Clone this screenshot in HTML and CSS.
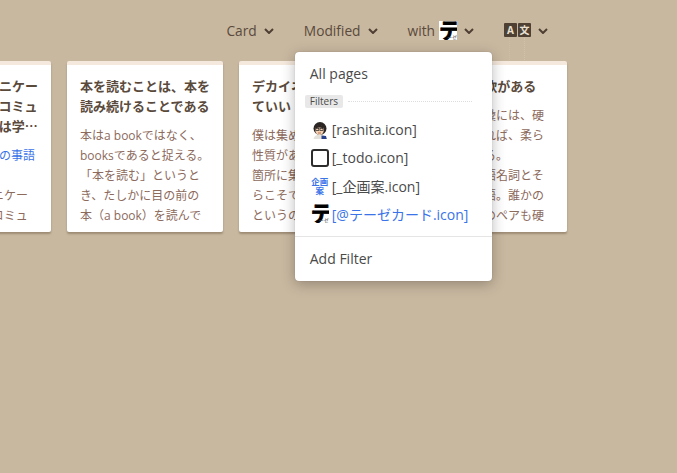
FILE: index.html
```html
<!DOCTYPE html>
<html lang="ja">

<head>
    <meta charset="UTF-8">
    <title>Pages</title>
    <link rel="stylesheet" href="styles.css">
</head>

<body>
    <nav class="toolbar">
        <div class="tool">
            <span>Card</span>
            <svg class="chevron" viewBox="0 0 10 6"><path d="M1 1l4 4 4-4"/></svg>
        </div>
        <div class="tool">
            <span>Modified</span>
            <svg class="chevron" viewBox="0 0 10 6"><path d="M1 1l4 4 4-4"/></svg>
            <div class="menu">
                <div class="menu-item all-pages">All pages</div>
                <div class="menu-label">
                    <span class="chip">Filters</span>
                    <span class="dots"></span>
                </div>
                <div class="filter">
                    <svg class="icon" viewBox="0 0 18 18">
                        <circle cx="9" cy="7.5" r="6.5" fill="#2b2623"/>
                        <path d="M2.500 18c.5-3 3-4.500 6.500-4.500s6 1.500 6.500 4.500z" fill="#e4e0da"/>
                        <path d="M10.500 14.500l4.500 .5.800 3H10.500z" fill="#27408b"/>
                        <ellipse cx="8.500" cy="9" rx="4.300" ry="5" fill="#f3d0b2"/>
                        <path d="M4 6c2-3 7-3 9 0l-1 1.500c-2-1.500-5-1.500-7 0z" fill="#2b2623"/>
                        <rect x="4.800" y="7.300" width="3" height="2.300" fill="none" stroke="#222" stroke-width=".7"/>
                        <rect x="9" y="7.300" width="3" height="2.300" fill="none" stroke="#222" stroke-width=".7"/>
                        <path d="M7 12h3" stroke="#a5553f" stroke-width=".8"/>
                    </svg>
                    <span>[rashita.icon]</span>
                </div>
                <div class="filter">
                    <span class="todo-box"></span>
                    <span>[_todo.icon]</span>
                </div>
                <div class="filter">
                    <span class="plan-icon">企画<br>案</span>
                    <span>[_企画案.icon]</span>
                </div>
                <div class="filter link">
                    <span class="these-icon these-bare">テ<small>ーゼ</small></span>
                    <span>[@テーゼカード.icon]</span>
                </div>
                <hr class="divider">
                <div class="menu-item add-filter">Add Filter</div>
            </div>
        </div>
        <div class="tool">
            <span>with</span>
            <span class="these-icon">テ<small>ーゼ</small></span>
            <svg class="chevron" viewBox="0 0 10 6"><path d="M1 1l4 4 4-4"/></svg>
        </div>
        <div class="tool">
            <span class="lang">
                <span class="lang-box">A</span>
                <span class="lang-box">文</span>
            </span>
            <svg class="chevron" viewBox="0 0 10 6"><path d="M1 1l4 4 4-4"/></svg>
            <span class="lang-dots"></span>
        </div>
    </nav>

    <main class="cards">
        <article class="card">
            <h3>ビジネスコミュニケー<br>ションとしてのコミュ<br>ニケーション力は学…</h3>
            <p class="card-link">Learning: 日本語の事語</p>
            <p>ビジネスコミュニケー<br>ションとしてのコミュ</p>
        </article>
        <article class="card">
            <h3>本を読むことは、本を<br>読み続けることである</h3>
            <p>本はa bookではなく、booksであると捉える。「本を読む」というとき、たしかに目の前の本（a book）を読んで</p>
        </article>
        <article class="card">
            <h3>デカイネタを書き続け<br>ていい</h3>
            <p>僕は集めたものを書く<br>性質がある。一つの<br>箇所に集めているか<br>らこそできる話がある<br>というのが大きい</p>
        </article>
        <article class="card">
            <h3>Aの文章に軟がある</h3>
            <p>日本語の語彙には、硬<br>い言葉があれば、柔ら<br>かい語もある。<br>例えば、漢語名詞とそ<br>れに対する語。誰かの<br>書いた言葉のペアも硬</p>
        </article>
    </main>
</body>

</html>
```

FILE: styles.css
```css
* {
    box-sizing: border-box;
    margin: 0;
    padding: 0;
}

body {
    background-color: #c9b8a0;
    font-family: 'Open Sans', 'Noto Sans CJK JP', sans-serif;
    height: 473px;
    overflow: hidden;
}

.toolbar {
    display: flex;
    justify-content: flex-end;
    align-items: center;
    gap: 30px;
    height: 60px;
    margin-bottom: 1px;
    padding-right: 129px;
    color: #5a4a3c;
    font-size: 13.75px;
}

.tool {
    position: relative;
    display: flex;
    align-items: center;
}

.chevron {
    width: 10px;
    height: 6px;
    margin-left: 7px;
    margin-top: 2px;
    fill: none;
    stroke: #4e3f33;
    stroke-width: 2;
}

.these-icon {
    position: relative;
    display: block;
    flex: none;
    width: 18px;
    height: 19px;
    margin-left: 4px;
    background-color: #fff;
    color: #000;
    font-size: 21px;
    font-weight: 700;
    line-height: 18px;
    text-align: center;
    -webkit-text-stroke: 0.8px #000;
    overflow: hidden;
}

.these-icon small {
    position: absolute;
    right: 0;
    bottom: 0;
    font-size: 5px;
    font-weight: 400;
    line-height: 6px;
    color: #555;
    -webkit-text-stroke: 0;
    white-space: nowrap;
}

.these-bare {
    margin-left: 0;
    background-color: transparent;
}

.lang {
    display: flex;
    gap: 1px;
}

.lang-box {
    width: 13px;
    height: 14px;
    border-radius: 1px;
    background-color: #4e4033;
    color: #e9e0d4;
    font-size: 10px;
    font-weight: 700;
    line-height: 14px;
    text-align: center;
}

.lang-dots {
    position: absolute;
    top: 15px;
    left: 5px;
    width: 16px;
    height: 22px;
    border-left: 1px dotted rgba(255, 255, 255, 0.08);
    border-right: 1px dotted rgba(255, 255, 255, 0.14);
}

.menu {
    position: absolute;
    top: 31px;
    left: -9px;
    z-index: 2;
    width: 197px;
    height: 229px;
    padding-top: 8px;
    background-color: #fff;
    border-radius: 4px;
    box-shadow: 0 3px 14px rgba(0, 0, 0, 0.28), 0 0 1px rgba(0, 0, 0, 0.3);
    color: #4a4a4a;
    font-size: 14px;
}

.menu-item {
    padding-left: 15px;
    line-height: 28px;
}

.menu-label {
    display: flex;
    align-items: center;
    gap: 5px;
    margin-top: 7px;
    padding: 0 20px 0 10px;
}

.chip {
    padding: 0 5px;
    background-color: #e8e8e8;
    border-radius: 2px;
    font-size: 10px;
    line-height: 13px;
}

.dots {
    flex: 1;
    border-top: 1px dotted #ddd;
}

.filter {
    display: flex;
    align-items: center;
    gap: 3px;
    height: 28px;
    padding-left: 16px;
    white-space: nowrap;
}

.menu-label + .filter {
    margin-top: 8px;
}

.link {
    color: #3b73e8;
}

.icon,
.todo-box,
.plan-icon {
    display: block;
    flex: none;
    width: 18px;
    height: 18px;
}

.todo-box {
    border: 2px solid #2c2c2c;
    border-radius: 3px;
}

.plan-icon {
    color: #3b73e8;
    font-size: 8.5px;
    font-weight: 700;
    line-height: 9px;
    text-align: center;
}

.divider {
    margin-top: 8px;
    border: 0;
    border-top: 1px solid #e5e5e5;
}

.add-filter {
    margin-top: 8px;
}

.cards {
    display: flex;
    gap: 16px;
    width: 800px;
    margin-left: -105px;
}

.card {
    flex: none;
    width: 156px;
    height: 171px;
    padding: 11px 13px 0;
    background-color: #fff;
    border-top: 4px solid #f5e8dc;
    border-radius: 2px;
    box-shadow: 0 2px 2px rgba(60, 40, 20, 0.3);
    overflow: hidden;
}

.card h3 {
    margin-bottom: 10px;
    color: #5a4a3c;
    font-family: 'Noto Sans CJK JP', sans-serif;
    font-size: 13px;
    font-weight: 700;
    line-height: 20px;
}

.card p {
    color: #8c6a5c;
    font-size: 12px;
    line-height: 20px;
}

.card .card-link {
    margin-bottom: 20px;
    color: #3b73e8;
}
```
